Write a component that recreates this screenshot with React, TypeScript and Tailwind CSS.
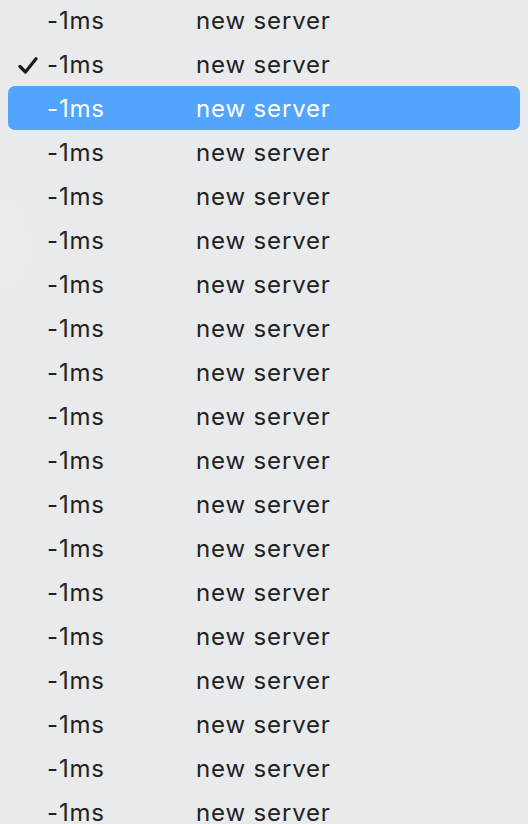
import React from 'react';

const rows = Array.from({ length: 19 }, (_, i) => ({ id: i, latency: '-1ms', name: 'new server' }));

export default function App() {
  return (
    <div
      className="h-[824px] w-[528px] overflow-hidden bg-[#e9eaec] bg-[radial-gradient(ellipse_45px_70px_at_0px_245px,#ecedef_50%,transparent_100%)]"
      style={{ fontFamily: 'Inter, "Noto Sans", sans-serif' }}
    >
      <ul className="-mt-[2px] flex flex-col px-2">
        {rows.map((row) => {
          const selected = row.id === 2;
          const checked = row.id === 1;
          return (
            <li
              key={row.id}
              className={`flex h-11 items-center rounded-[7px] pt-[2px] text-[24px] tracking-[0.85px] ${
                selected ? 'bg-[#53a4fd] text-white' : 'text-[#222222]'
              }`}
            >
              <span className="flex w-[38px] justify-center pl-[1px]">
                {checked && (
                  <svg width="20" height="17" viewBox="0 0 20 17" fill="none">
                    <path d="M2 9.5 L7.5 15 L18 1.8" stroke="#1c1c1e" strokeWidth="3.2" strokeLinecap="round" strokeLinejoin="round" />
                  </svg>
                )}
              </span>
              <span className="w-[150px] pl-[1px]">{row.latency}</span>
              <span>{row.name}</span>
            </li>
          );
        })}
      </ul>
    </div>
  );
}
